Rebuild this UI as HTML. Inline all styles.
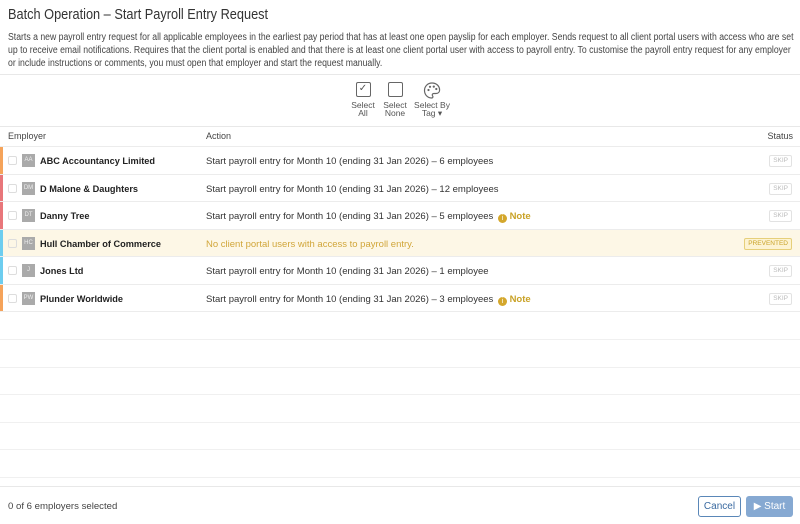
<!DOCTYPE html>
<html><head><meta charset="utf-8"><style>
*{box-sizing:border-box;margin:0;padding:0}
body{width:800px;height:524px;background:#fff;font-family:"Liberation Sans",sans-serif;color:#333;position:relative;overflow:hidden}
.title{position:absolute;left:8px;top:6px;font-size:15px;color:#333;white-space:nowrap;transform:scaleX(0.85);transform-origin:top left}
.desc{position:absolute;left:8px;top:31px;width:910px;font-size:10px;line-height:13px;color:#444;white-space:nowrap;transform:scaleX(0.868);transform-origin:top left}
.hr{position:absolute;left:0;width:800px;height:1px;background:#e8e8e8}
.tool{position:absolute;top:82px;text-align:center;font-size:8.5px;line-height:8px;color:#555;white-space:nowrap}
.box{width:15px;height:15px;border:1.3px solid #666;border-radius:2px;margin:0 auto 4px;font-size:10px;line-height:12px}
.hdr{position:absolute;top:131px;font-size:9px;color:#444}
.row{position:absolute;left:0;width:800px;height:27.5px;border-bottom:1px solid #ececec;line-height:27px}
.bar{position:absolute;left:0;top:0;width:3px;height:100%}
.cb{position:absolute;left:8px;top:9px;width:9px;height:9px;border:1px solid #ddd;border-radius:2px}
.av{position:absolute;left:22px;top:7px;width:13px;height:13px;background:#aaa;color:#eee;font-size:6px;line-height:13px;text-align:center}
.name{position:absolute;left:40px;top:1px;font-size:9.2px;font-weight:bold;color:#222}
.act{position:absolute;left:206px;top:1px;font-size:9.5px;color:#333;white-space:nowrap}
.note{color:#c9a227;font-weight:bold}
.ic{display:inline-block;width:9px;height:9px;border-radius:50%;background:#d4a72c;color:#fff;font-size:7px;line-height:9px;text-align:center;vertical-align:-1px;margin-left:2px}
.tag{position:absolute;right:8px;top:8px;font-size:6.5px;line-height:8px;border:1px solid #e2e2e2;border-radius:2px;padding:1px 3px;color:#bbb}
.empty{position:absolute;left:0;width:800px;height:1px;background:#f0f0f0}
</style></head><body>
<div class="title">Batch Operation – Start Payroll Entry Request</div>
<div class="desc">Starts a new payroll entry request for all applicable employees in the earliest pay period that has at least one open payslip for each employer. Sends request to all client portal users with access who are set<br>up to receive email notifications. Requires that the client portal is enabled and that there is at least one client portal user with access to payroll entry. To customise the payroll entry request for any employer<br>or include instructions or comments, you must open that employer and start the request manually.</div>
<div class="hr" style="top:74px"></div>
<div class="tool" style="left:350px;width:26px"><div class="box">✓</div>Select<br>All</div>
<div class="tool" style="left:381px;width:28px"><div class="box"></div>Select<br>None</div>
<div class="tool" style="left:412px;width:40px"><svg width="18" height="17" viewBox="0 0 18 17" style="display:block;margin:0 auto 2px"><path d="M9 1C4.5 1 1.5 4.5 1.5 8.5S4.5 16 8.5 16c1.5 0 1.8-1.2 1-2.2-.8-1 .1-2.3 1.3-2.3H13c2.3 0 3.6-1.5 3.6-3.5C16.6 4 13.3 1 9 1z" fill="none" stroke="#666" stroke-width="1.2"/><circle cx="5.5" cy="8" r="1.1" fill="#666"/><circle cx="7" cy="4.8" r="1.1" fill="#666"/><circle cx="10.8" cy="4.6" r="1.1" fill="#666"/><circle cx="13.3" cy="7" r="1.1" fill="#666"/></svg>Select By<br>Tag ▾</div>
<div class="hr" style="top:126px"></div>
<div class="hdr" style="left:8px">Employer</div>
<div class="hdr" style="left:206px">Action</div>
<div class="hdr" style="right:7px">Status</div>
<div class="hr" style="top:146px;background:#ececec"></div>

<div class="row" style="top:147px"><div class="bar" style="background:#f5a35a"></div><div class="cb"></div><div class="av">AA</div><div class="name">ABC Accountancy Limited</div><div class="act">Start payroll entry for Month 10 (ending 31 Jan 2026) – 6 employees</div><div class="tag">SKIP</div></div>
<div class="row" style="top:174.5px"><div class="bar" style="background:#e8767a"></div><div class="cb"></div><div class="av">DM</div><div class="name">D Malone &amp; Daughters</div><div class="act">Start payroll entry for Month 10 (ending 31 Jan 2026) – 12 employees</div><div class="tag">SKIP</div></div>
<div class="row" style="top:202px"><div class="bar" style="background:#e8767a"></div><div class="cb"></div><div class="av">DT</div><div class="name">Danny Tree</div><div class="act">Start payroll entry for Month 10 (ending 31 Jan 2026) – 5 employees <span class="ic">i</span> <span class="note">Note</span></div><div class="tag">SKIP</div></div>
<div class="row" style="top:229.5px;background:#fdf7e6"><div class="bar" style="background:#6dcdef"></div><div class="cb"></div><div class="av">HC</div><div class="name">Hull Chamber of Commerce</div><div class="act" style="color:#d1a63a">No client portal users with access to payroll entry.</div><div class="tag" style="color:#c9a227;border-color:#e6cf7a;background:#fdf3d2">PREVENTED</div></div>
<div class="row" style="top:257px"><div class="bar" style="background:#6dcdef"></div><div class="cb"></div><div class="av">J</div><div class="name">Jones Ltd</div><div class="act">Start payroll entry for Month 10 (ending 31 Jan 2026) – 1 employee</div><div class="tag">SKIP</div></div>
<div class="row" style="top:284.5px"><div class="bar" style="background:#f5a35a"></div><div class="cb"></div><div class="av">PW</div><div class="name">Plunder Worldwide</div><div class="act">Start payroll entry for Month 10 (ending 31 Jan 2026) – 3 employees <span class="ic">i</span> <span class="note">Note</span></div><div class="tag">SKIP</div></div>

<div class="empty" style="top:339px"></div>
<div class="empty" style="top:367px"></div>
<div class="empty" style="top:394px"></div>
<div class="empty" style="top:422px"></div>
<div class="empty" style="top:449px"></div>
<div class="empty" style="top:477px"></div>
<div class="hr" style="top:486px"></div>
<div style="position:absolute;left:8px;top:501px;font-size:9.6px;color:#444">0 of 6 employers selected</div>
<div style="position:absolute;left:698px;top:496px;width:43px;height:21px;border:1px solid #5a87b8;border-radius:3px;color:#3a6aa0;font-size:10px;text-align:center;line-height:19px">Cancel</div>
<div style="position:absolute;left:746px;top:496px;width:47px;height:21px;background:#86a9d2;border-radius:3px;color:#fff;font-size:10px;text-align:center;line-height:21px">▶ Start</div>
</body></html>
